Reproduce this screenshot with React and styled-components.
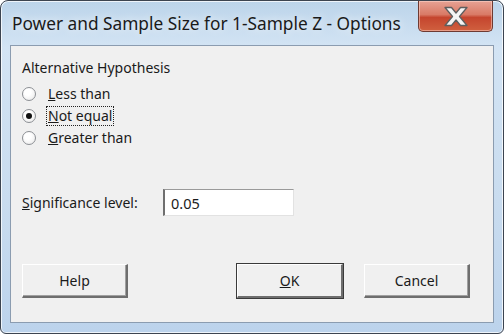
import React from 'react'
import styled, { createGlobalStyle } from 'styled-components'

const GlobalStyle = createGlobalStyle`
  html, body {
    margin: 0;
    padding: 0;
    background: #ffffff;
  }
  body {
    font-family: 'Noto Sans', 'Open Sans', sans-serif;
  }
`

function App() {
  return (
    <>
      <GlobalStyle />
      <Window>
        <TitleBar>
          <Title>Power and Sample Size for 1-Sample Z - Options</Title>
          <CloseButton aria-label='Close'>
            <svg width='26' height='21' viewBox='0 0 26 21'>
              <path
                d='M2 1.5 L8.5 1.5 L13 7 L17.5 1.5 L24 1.5 L16.5 10.5 L24 19.5 L17.5 19.5 L13 14 L8.5 19.5 L2 19.5 L9.5 10.5 Z'
                fill='#f4f4f4'
                stroke='#5e5e5e'
                strokeWidth='1.3'
                strokeLinejoin='round'
              />
            </svg>
          </CloseButton>
        </TitleBar>
        <Client>
          <GroupLabel>Alternative Hypothesis</GroupLabel>
          <RadioList>
            <RadioRow>
              <Radio />
              <RadioText>
                <u>L</u>ess than
              </RadioText>
            </RadioRow>
            <RadioRow>
              <Radio checked />
              <RadioText focused>
                <u>N</u>ot equal
              </RadioText>
            </RadioRow>
            <RadioRow>
              <Radio />
              <RadioText>
                <u>G</u>reater than
              </RadioText>
            </RadioRow>
          </RadioList>
          <FieldRow>
            <FieldLabel>
              <u>S</u>ignificance level:
            </FieldLabel>
            <TextInput defaultValue='0.05' />
          </FieldRow>
          <ButtonRow>
            <Button>Help</Button>
            <RightButtons>
              <Button primary>
                <u>O</u>K
              </Button>
              <Button>Cancel</Button>
            </RightButtons>
          </ButtonRow>
        </Client>
      </Window>
    </>
  )
}

const Window = styled.div`
  box-sizing: border-box;
  width: 504px;
  height: 334px;
  border: 1px solid #3c4450;
  border-radius: 8px 8px 6px 6px;
  background: linear-gradient(
    180deg,
    #bcd4ea 0%,
    #d3e4f4 14%,
    #c9dcef 60%,
    #bcd3ec 100%
  );
  box-shadow: inset 0 0 0 1px rgba(255, 255, 255, 0.75);
  padding: 0 9px 10px 9px;
  display: flex;
  flex-direction: column;
`

const TitleBar = styled.div`
  height: 44px;
  display: flex;
  align-items: flex-start;
  justify-content: space-between;
`

const Title = styled.div`
  margin-top: 11px;
  margin-left: 2px;
  font-size: 17.3px;
  color: #1a1a1a;
  text-shadow: 0 0 8px rgba(255, 255, 255, 0.9);
`

const CloseButton = styled.div`
  width: 75px;
  height: 31px;
  margin-right: 1px;
  box-sizing: border-box;
  border: 1px solid #6e3a32;
  border-top: none;
  border-radius: 0 0 5px 5px;
  background: linear-gradient(
    180deg,
    #e6a294 0%,
    #d97a66 45%,
    #c5452e 55%,
    #d0603f 100%
  );
  box-shadow: inset 0 0 0 1px rgba(255, 220, 210, 0.5);
  display: flex;
  align-items: center;
  justify-content: center;
`

const Client = styled.div`
  flex: 1;
  box-sizing: border-box;
  background: #f0f0f0;
  border: 1px solid #8b9cb0;
  padding: 11px 11px 0 11px;
  display: flex;
  flex-direction: column;
  font-size: 14px;
  color: #1a1a1a;
`

const GroupLabel = styled.div`
  height: 22px;
  line-height: 22px;
`

const RadioList = styled.div`
  margin-top: 4px;
  display: flex;
  flex-direction: column;
`

const RadioRow = styled.div`
  height: 22px;
  display: flex;
  align-items: center;
  gap: 10px;
`

const Radio = styled.span`
  position: relative;
  box-sizing: border-box;
  width: 14px;
  height: 14px;
  border-radius: 50%;
  border: 1px solid #8c8f94;
  background: radial-gradient(circle at 40% 35%, #ffffff 30%, #e6e6e6 100%);
  &::after {
    content: '';
    position: absolute;
    left: 3px;
    top: 3px;
    width: 6px;
    height: 6px;
    border-radius: 50%;
    background: #111111;
    display: ${(p) => (p.checked ? 'block' : 'none')};
  }
`

const RadioText = styled.span`
  padding: 0 1px;
  border: 1px dotted ${(p) => (p.focused ? '#222222' : 'transparent')};
  line-height: 18px;
`

const FieldRow = styled.div`
  margin-top: 40px;
  display: flex;
  align-items: center;
`

const FieldLabel = styled.span`
  width: 141px;
`

const TextInput = styled.input`
  box-sizing: border-box;
  width: 131px;
  height: 27px;
  border-style: solid;
  border-width: 1px 1px 1px 2px;
  border-color: #9a9a9a #e2e2e2 #e2e2e2 #6f6f6f;
  background: #ffffff;
  font-family: 'Noto Sans', 'Open Sans', sans-serif;
  font-size: 14.5px;
  color: #1a1a1a;
  padding: 0 6px;
  outline: none;
`

const ButtonRow = styled.div`
  margin-top: 48px;
  display: flex;
  justify-content: space-between;
  padding-right: 12px;
`

const RightButtons = styled.div`
  display: flex;
  gap: 21px;
`

const Button = styled.div`
  box-sizing: border-box;
  width: 106px;
  height: 34px;
  display: flex;
  align-items: center;
  justify-content: center;
  background: #f0f0f0;
  border-style: solid;
  border-width: 1px 2px 2px 1px;
  border-color: #ffffff #6e6e6e #6e6e6e #ffffff;
  box-shadow: ${(p) =>
    p.primary ? '0 0 0 1px #3a3a3a' : 'inset -1px -1px 0 #a0a0a0'};
  font-size: 14px;
  color: #1a1a1a;
`

export default App
